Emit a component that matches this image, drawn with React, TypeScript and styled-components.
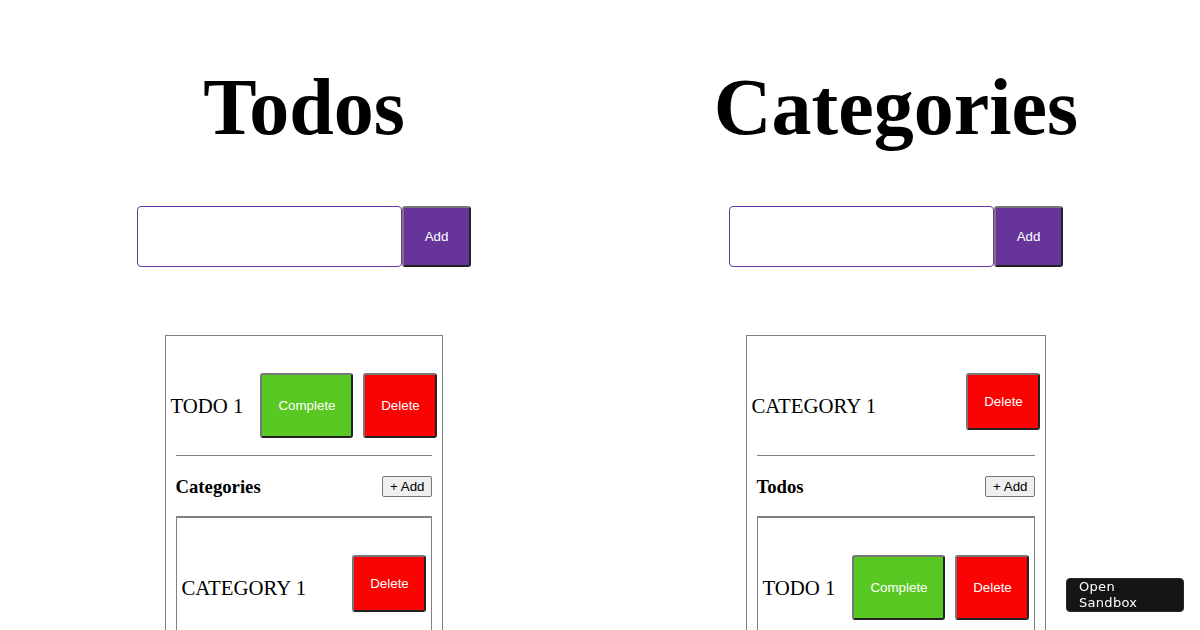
import React from "react";
import styled, { createGlobalStyle } from "styled-components";

const GlobalStyle = createGlobalStyle`
  body {
    margin: 8px;
    font-family: "Liberation Serif", "Times New Roman", serif;
    background: #ffffff;
    color: #000000;
  }
`;

const Page = styled.div`
  display: flex;
`;

const Column = styled.section`
  flex: 1;
  display: flex;
  flex-direction: column;
  align-items: center;
`;

const Title = styled.h1`
  font-size: 80px;
  font-weight: bold;
  line-height: normal;
  margin: 53.6px 0 53.6px;
`;

const Form = styled.form`
  display: flex;
  height: 61px;
  margin-bottom: 68px;
`;

const TextInput = styled.input`
  box-sizing: border-box;
  width: 265px;
  height: 61px;
  border: 1px solid #6a35a0;
  border-radius: 4px;
  outline: none;
  background: #ffffff;
`;

const BaseButton = styled.button`
  box-sizing: border-box;
  border-width: 2px;
  border-style: solid;
  border-color: #777777 #222222 #222222 #777777;
  border-radius: 3px;
  color: #ffffff;
  font-family: "Liberation Sans", Arial, sans-serif;
  font-size: 13.33px;
  padding: 0;
  cursor: pointer;
`;

const SubmitButton = styled(BaseButton)`
  width: 69px;
  height: 61px;
  background: #663399;
`;

const Card = styled.div<{ $nested?: boolean }>`
  box-sizing: border-box;
  width: ${(p) => (p.$nested ? "auto" : "fit-content")};
  margin: ${(p) => (p.$nested ? "0 10px" : "0")};
  border: 1px solid #808080;
  border-top-width: ${(p) => (p.$nested ? "2px" : "1px")};
`;

const Row = styled.div`
  display: flex;
  align-items: center;
  height: 65px;
  padding: 37px 5px 0;
`;

const Label = styled.span`
  flex: 1;
  font-size: 20.8px;
  padding-right: 17px;
  white-space: nowrap;
`;

const ActionButton = styled(BaseButton)<{ $kind: "complete" | "delete"; $short?: boolean }>`
  width: ${(p) => (p.$kind === "complete" ? "93px" : "74px")};
  height: ${(p) => (p.$short ? "57px" : "65px")};
  align-self: ${(p) => (p.$short ? "flex-start" : "center")};
  margin-left: ${(p) => (p.$kind === "delete" && !p.$short ? "10px" : "0")};
  background: ${(p) => (p.$kind === "complete" ? "#5ac823" : "#f90303")};
`;

const Divider = styled.hr`
  border: none;
  border-top: 1px solid #808080;
  margin: 17px 10px 0;
  height: 0;
`;

const SectionHeader = styled.div`
  display: flex;
  align-items: center;
  justify-content: space-between;
  height: 21px;
  margin: 20px 10px 19px;
`;

const SectionTitle = styled.h3`
  margin: 0;
  font-size: 18.72px;
  font-weight: bold;
`;

const SmallButton = styled.button`
  box-sizing: border-box;
  height: 21px;
  padding: 1px 7px;
  font-family: "Liberation Sans", Arial, sans-serif;
  font-size: 13.33px;
  color: #000000;
  background: #efefef;
  border: 1px solid #767676;
  border-radius: 2px;
`;

const Spacer = styled.div`
  height: 40px;
`;

const SandboxButton = styled.button`
  position: fixed;
  right: 16px;
  bottom: 18px;
  box-sizing: border-box;
  width: 118px;
  height: 34px;
  padding: 0 12px;
  text-align: left;
  background: #151515;
  color: #ffffff;
  border: 1px solid #2a2a2a;
  border-radius: 4px;
  font-family: "DejaVu Sans", sans-serif;
  font-size: 13px;
  line-height: 16px;
  letter-spacing: 0.3px;
`;

function TodoRow() {
  return (
    <Row>
      <Label>TODO 1</Label>
      <ActionButton $kind="complete">Complete</ActionButton>
      <ActionButton $kind="delete">Delete</ActionButton>
    </Row>
  );
}

function CategoryRow() {
  return (
    <Row>
      <Label>CATEGORY 1</Label>
      <ActionButton $kind="delete" $short>
        Delete
      </ActionButton>
    </Row>
  );
}

export default function App() {
  return (
    <>
      <GlobalStyle />
      <Page>
        <Column>
          <Title>Todos</Title>
          <Form onSubmit={(e) => e.preventDefault()}>
            <TextInput type="text" />
            <SubmitButton type="submit">Add</SubmitButton>
          </Form>
          <Card>
            <TodoRow />
            <Divider />
            <SectionHeader>
              <SectionTitle>Categories</SectionTitle>
              <SmallButton>+ Add</SmallButton>
            </SectionHeader>
            <Card $nested>
              <CategoryRow />
              <Spacer />
            </Card>
          </Card>
        </Column>
        <Column>
          <Title>Categories</Title>
          <Form onSubmit={(e) => e.preventDefault()}>
            <TextInput type="text" />
            <SubmitButton type="submit">Add</SubmitButton>
          </Form>
          <Card>
            <CategoryRow />
            <Divider />
            <SectionHeader>
              <SectionTitle>Todos</SectionTitle>
              <SmallButton>+ Add</SmallButton>
            </SectionHeader>
            <Card $nested>
              <TodoRow />
              <Spacer />
            </Card>
          </Card>
        </Column>
      </Page>
      <SandboxButton>Open Sandbox</SandboxButton>
    </>
  );
}
